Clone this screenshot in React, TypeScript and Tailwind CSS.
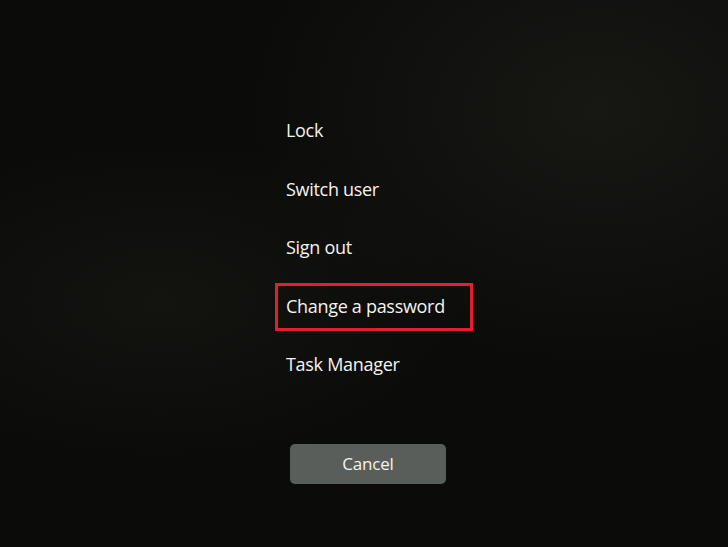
const items = ["Lock", "Switch user", "Sign out", "Change a password", "Task Manager"];

export default function App() {
  return (
    <div
      className="relative h-[547px] w-[728px] overflow-hidden bg-[#0b0b09] bg-[radial-gradient(ellipse_at_82%_20%,#171714_0%,transparent_42%),radial-gradient(ellipse_at_22%_55%,#131310_0%,transparent_38%)]"
      style={{ fontFamily: '"Open Sans", "Noto Sans", sans-serif' }}
    >
      <div className="flex flex-col items-start pl-[286px] pt-[118px]">
        <ul className="flex flex-col gap-[34.5px]">
          {items.map((label) => (
            <li
              key={label}
              className="relative text-[18px] font-medium leading-[24px] tracking-[-0.3px] text-[#f5f3ee]"
            >
              {label}
              {label === "Change a password" && (
                <span className="pointer-events-none absolute left-[-11px] top-[-11px] h-[48px] w-[198px] border-[3px] border-[#e41f2d]" />
              )}
            </li>
          ))}
        </ul>
        <button
          type="button"
          className="ml-[4px] mt-[68px] flex h-[40px] w-[156px] items-center justify-center rounded-[5px] bg-[#5a5e5a] text-[17px] font-medium tracking-[-0.2px] text-[#f5f3ee]"
        >
          Cancel
        </button>
      </div>
    </div>
  );
}
